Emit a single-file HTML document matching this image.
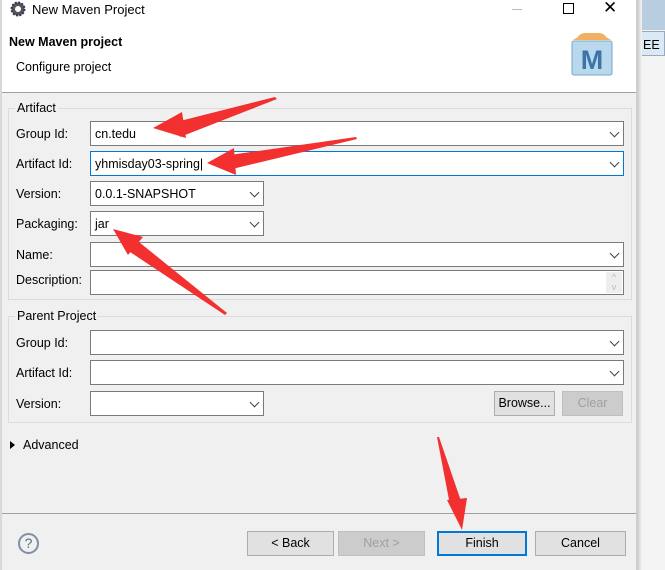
<!DOCTYPE html>
<html><head><meta charset="utf-8"><style>
*{margin:0;padding:0;box-sizing:border-box}
body{width:665px;height:570px;overflow:hidden;background:#f0f0f0;font-family:"Liberation Sans",sans-serif;font-size:12.5px;color:#000;position:relative}
.a{position:absolute}
.lbl{position:absolute;left:16px;font-size:12.5px}
.inp{position:absolute;background:#fff;border:1px solid #7a7a7a;height:25px;padding:5px 0 0 4px;font-size:12.5px}
.chev{position:absolute;right:5px;top:7px;width:7px;height:7px;border-right:1px solid #444;border-bottom:1px solid #444;transform:rotate(45deg)}
.grp{position:absolute;border:1px solid #dcdcdc;left:8px;width:624px}
.gt{position:absolute;top:-8px;left:6px;background:#f0f0f0;padding:0 2px}
.btn{position:absolute;border:1px solid #adadad;background:#e1e1e1;height:25px;text-align:center;line-height:23px;font-size:12.5px}
.dis{color:#a0a0a0;background:#cccccc;border-color:#bfbfbf}
</style></head><body>
<div class="a" style="left:637px;top:0;width:28px;height:570px;background:#f4f4f4"></div>
<div class="a" style="left:637px;top:0;width:28px;height:30px;background:#b9cde0"></div>
<div class="a" style="left:637px;top:31px;width:28px;height:25px;background:#dbe8f5;border:1px solid #9ab"></div>
<div class="a" style="left:643px;top:38px;font-size:12.5px">EE</div>
<div class="a" style="left:637px;top:0;width:5px;height:570px;background:linear-gradient(90deg,#c8c8c8,#f4f4f4)"></div>
<div class="a" style="left:0;top:0;width:637px;height:570px;background:#f0f0f0;border-left:2px solid #d8d8d8;border-right:1px solid #cfcfcf"></div>
<div class="a" style="left:2px;top:0;width:634px;height:93px;background:#fff;border-bottom:1px solid #a0a0a0"></div>
<svg class="a" style="left:10px;top:1px" width="16" height="16" viewBox="0 0 16 16"><circle cx="8" cy="8" r="6.5" fill="#555" stroke="#3a2f5a" stroke-width="2" stroke-dasharray="2 1.4"/><circle cx="8" cy="8" r="3" fill="#fff"/></svg>
<div class="a" style="left:32px;top:2px;font-size:13px">New Maven Project</div>
<div class="a" style="left:512px;top:9px;width:10px;height:1px;background:#bbb"></div>
<div class="a" style="left:563px;top:3px;width:11px;height:11px;border:1px solid #000"></div>
<div class="a" style="left:603px;top:0;font-size:17px;line-height:16px">✕</div>
<div class="a" style="left:9px;top:35px;font-weight:bold;font-size:12.5px">New Maven project</div>
<div class="a" style="left:16px;top:60px">Configure project</div>
<svg class="a" style="left:566px;top:32px" width="55" height="45" viewBox="0 0 55 45"><path d="M12 5 Q14 1 20 1 L32 1 Q38 1 40 5 L45 8 L7 8Z" fill="#f0b060"/><rect x="6" y="9" width="40" height="34" rx="2" fill="#b8d8ee" stroke="#7fa3c0"/><text x="26" y="37" text-anchor="middle" font-family="Liberation Sans" font-weight="bold" font-size="27" fill="#3f73a8">M</text></svg>
<div class="grp" style="top:108px;height:192px"><span class="gt">Artifact</span></div>
<div class="lbl" style="top:127px">Group Id:</div>
<div class="inp" style="left:90px;top:121px;width:534px">cn.tedu<span class="chev"></span></div>
<div class="lbl" style="top:157px">Artifact Id:</div>
<div class="inp" style="left:90px;top:151px;width:534px;border-color:#0078d7">yhmisday03-spring|<span class="chev"></span></div>
<div class="lbl" style="top:187px">Version:</div>
<div class="inp" style="left:90px;top:181px;width:174px">0.0.1-SNAPSHOT<span class="chev"></span></div>
<div class="lbl" style="top:217px">Packaging:</div>
<div class="inp" style="left:90px;top:211px;width:174px">jar<span class="chev"></span></div>
<div class="lbl" style="top:248px">Name:</div>
<div class="inp" style="left:90px;top:242px;width:534px"><span class="chev"></span></div>
<div class="lbl" style="top:273px">Description:</div>
<div class="inp" style="left:90px;top:270px;width:534px;height:25px"><span class="a" style="right:1px;top:1px;width:16px;height:21px;background:#eee;color:#bbb;font-size:9px;text-align:center;line-height:10px">^<br>v</span></div>
<div class="grp" style="top:316px;height:107px"><span class="gt">Parent Project</span></div>
<div class="lbl" style="top:336px">Group Id:</div>
<div class="inp" style="left:90px;top:330px;width:534px"><span class="chev"></span></div>
<div class="lbl" style="top:366px">Artifact Id:</div>
<div class="inp" style="left:90px;top:360px;width:534px"><span class="chev"></span></div>
<div class="lbl" style="top:397px">Version:</div>
<div class="inp" style="left:90px;top:391px;width:174px"><span class="chev"></span></div>
<div class="btn" style="left:494px;top:391px;width:61px">Browse...</div>
<div class="btn dis" style="left:562px;top:391px;width:61px">Clear</div>
<div class="a" style="left:10px;top:441px;width:0;height:0;border-left:5px solid #000;border-top:4px solid transparent;border-bottom:4px solid transparent"></div>
<div class="a" style="left:23px;top:438px">Advanced</div>
<div class="a" style="left:2px;top:513px;width:634px;height:1px;background:#a0a0a0"></div>
<div class="a" style="left:18px;top:533px;width:21px;height:21px;border:2px solid #7f8fa6;border-radius:50%;text-align:center;font-size:14px;line-height:17px;color:#5d6b80">?</div>
<div class="btn" style="left:247px;top:531px;width:87px">&lt; Back</div>
<div class="btn dis" style="left:338px;top:531px;width:87px">Next &gt;</div>
<div class="btn" style="left:437px;top:531px;width:90px;border:2px solid #0078d7;line-height:21px">Finish</div>
<div class="btn" style="left:535px;top:531px;width:91px">Cancel</div>
<svg class="a" style="left:0;top:0" width="665" height="570">
<g fill="#f23030">
<polygon points="275,97 176,122 180,137 277,99"/><polygon points="153,128 182,112 186,138"/>
<polygon points="356,137 230,155 232,169 357,139"/><polygon points="207,163 234,148 236,175"/>
<polygon points="227,313 134,238 124,248 225,315"/><polygon points="113,229 143,237 128,255"/>
<polygon points="437,437 450,505 462,504 439,437"/><polygon points="462,530 447,500 467,498"/>
</g></svg>
</body></html>
